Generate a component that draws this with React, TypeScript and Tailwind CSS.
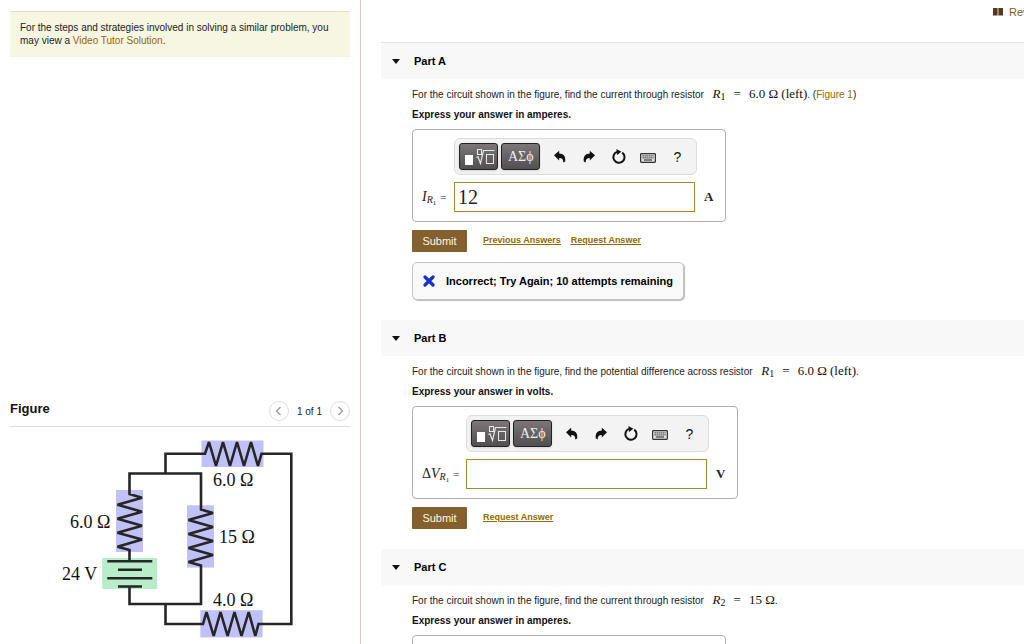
import React, { useId, useState } from "react";

interface PartProps {
  title: string;
  prompt: React.ReactNode;
  instruction: string;
  label: React.ReactNode;
  labelClass: string;
  unit: string;
  initialValue?: string;
  first?: boolean;
  hasPrevious?: boolean;
  feedback?: string;
}

const LINK = "text-[#8f6b00] hover:underline";
const MATH = "font-['Liberation_Serif',serif]";

function UndoIcon({ flip = false }: { flip?: boolean }) {
  return (
    <svg width="14" height="14" viewBox="0 0 14 14" className={flip ? "-scale-x-100" : ""} aria-hidden="true">
      <path d="M1 5.200 6.200.8v2.700c4.200 0 6.800 2.800 6 7.900l-2 1.200c.4-3-.8-4.700-4-4.700v2.500z" fill="#111" />
    </svg>
  );
}

function ResetIcon() {
  return (
    <svg width="16" height="16" viewBox="0 0 16 16" aria-hidden="true">
      <path d="M11.200 3.600A5.600 5.600 0 1 1 6 2.900" fill="none" stroke="#111" strokeWidth="2" />
      <path d="M5.400 0 10.400 2.700 6 6z" fill="#111" />
    </svg>
  );
}

function KeyboardIcon() {
  return (
    <svg width="16" height="10" viewBox="0 0 16 10" aria-hidden="true">
      <rect x=".6" y=".6" width="14.800" height="8.800" rx=".8" fill="#ddd" stroke="#333" strokeWidth="1.200" />
      <path d="M2.500 2.800h11M2.500 4.800h11" stroke="#444" strokeWidth="1.200" strokeDasharray="1.300 .7" />
      <path d="M4 7h8" stroke="#444" strokeWidth="1.200" />
    </svg>
  );
}

function TemplateIcon() {
  return (
    <svg width="32" height="20" viewBox="0 0 32 20" aria-hidden="true" className="shrink-0">
      <rect x="2" y="8" width="8" height="10" fill="#fff" />
      <g fill="none" stroke="#e8e8e8" strokeWidth="1">
        <rect x="14.500" y="2.500" width="4" height="5" />
        <path d="M13.500 10.500 15 9.800l2.500 6.700 3-13H31.500" strokeWidth="1.200" />
        <rect x="23.500" y="7.500" width="7" height="9" />
      </g>
    </svg>
  );
}

function Toolbar() {
  const dark =
    "flex h-[27px] w-10 items-center justify-center rounded-[3px] border border-[#222] bg-linear-to-b from-[#7c7678] to-[#525052] text-[#eee] shadow-sm";
  const plain = "flex h-[27px] w-[30px] items-center justify-center text-[#111]";
  return (
    <div className="flex w-[243px] rounded-md border border-[#dcdcdc] bg-[#f3f3f3] p-1">
      <button type="button" aria-label="Templates" className={dark}>
        <TemplateIcon />
      </button>
      <button type="button" className={`${dark} ml-[3px] font-['Liberation_Serif',serif] text-sm`}>
        ΑΣϕ
      </button>
      <button type="button" aria-label="Undo" className={`${plain} ml-[5px]`}>
        <UndoIcon />
      </button>
      <button type="button" aria-label="Redo" className={plain}>
        <UndoIcon flip />
      </button>
      <button type="button" aria-label="Reset" className={plain}>
        <ResetIcon />
      </button>
      <button type="button" aria-label="Keyboard shortcuts" className={`${plain} pt-[2px]`}>
        <KeyboardIcon />
      </button>
      <button type="button" className={`${plain} text-sm`}>
        ?
      </button>
    </div>
  );
}

function Part({
  title,
  prompt,
  instruction,
  label,
  labelClass,
  unit,
  initialValue = "",
  first = false,
  hasPrevious = false,
  feedback,
}: PartProps) {
  const id = useId();
  const [open, setOpen] = useState(true);
  const [value, setValue] = useState(initialValue);

  return (
    <section className="mb-5">
      <h2 className={`bg-[#f8f8f8] ${first ? "border-t border-[#e2e2e2]" : ""}`}>
        <button
          type="button"
          onClick={() => setOpen(!open)}
          aria-expanded={open}
          className="flex h-9 w-full items-center gap-[14px] pl-[11px] text-[11px] font-bold text-black"
        >
          <svg width="8" height="5" viewBox="0 0 8 5" aria-hidden="true">
            <path d="M0 0h8L4 5z" fill="#111" />
          </svg>
          {title}
        </button>
      </h2>
      {open && (
        <div className="pt-[6px] pl-[31px]">
          <p className="h-[18px] text-[10px] leading-[18px] whitespace-nowrap">{prompt}</p>
          <p className="mt-[3px] text-[10px] leading-[18px] font-bold text-[#111]">{instruction}</p>
          <div className="mt-[5px] w-fit rounded-[4px] border border-[#b0b0b0] pt-2 pr-[10px] pb-[9px] pl-[9px]">
            <div className="flex">
              <span className={labelClass} />
              <Toolbar />
            </div>
            <div className="mt-[7px] flex items-center">
              <label htmlFor={id} className={`${labelClass} ${MATH} text-sm whitespace-nowrap text-[#222]`}>
                {label}
              </label>
              <input
                id={id}
                value={value}
                onChange={(e) => setValue(e.target.value)}
                className="h-[30px] w-[241px] border border-[#a58a2c] bg-white px-[3px] font-['Liberation_Serif',serif] text-xl text-[#222] outline-none"
              />
              <span className={`${MATH} ml-[9px] w-[11px] text-[13px] font-bold text-[#222]`}>{unit}</span>
            </div>
          </div>
          <div className="mt-2 flex items-center">
            <button type="button" className="h-[22px] w-[55px] rounded-[1px] bg-[#85602f] text-[11px] text-[#fdf8dc]">
              Submit
            </button>
            <div className="ml-4 flex gap-[10px] pb-[2px] text-[9px] leading-[18px] font-bold text-[#8f6b00] underline">
              {hasPrevious && <a href="#previous">Previous Answers</a>}
              <a href="#request">Request Answer</a>
            </div>
          </div>
          {feedback && (
            <div className="mt-[10px] flex h-[38px] w-fit items-center gap-[11px] rounded-[5px] border border-[#c4c4c4] bg-[#f9f9f9] px-[10px] text-[11px] font-bold text-black shadow-[1px_1px_1px_#bbb]">
              <svg width="12" height="12" viewBox="0 0 12 12" aria-hidden="true">
                <path d="M2 2l8 8M10 2l-8 8" stroke="#1531c9" strokeWidth="3.200" strokeLinecap="round" />
              </svg>
              {feedback}
            </div>
          )}
        </div>
      )}
    </section>
  );
}

function Quantity({ index, children }: { index: number; children: React.ReactNode }) {
  return (
    <span className={`${MATH} ml-[6px] text-[13px] text-[#111]`}>
      <i>R</i>
      <span className="relative top-[2px] text-[10px]">{index}</span>
      <span className="px-2">=</span>
      {children}
    </span>
  );
}

function AnswerLabel({ symbol, index }: { symbol: React.ReactNode; index: number }) {
  return (
    <>
      {symbol}
      <i className="relative top-[2px] text-[10px]">R</i>
      <span className="relative top-1 text-[7px]">{index}</span>
      <span className="pl-1 text-[11px]">=</span>
    </>
  );
}

function Circuit() {
  return (
    <svg viewBox="10 427 340 217" className="w-full" role="img" aria-label="Circuit diagram">
      <g fill="#bfc1f8">
        <rect x="201.500" y="440.500" width="62" height="26.500" />
        <rect x="116" y="490" width="27" height="62" />
        <rect x="187" y="505.300" width="27" height="62.300" />
        <rect x="200.300" y="610.200" width="62.300" height="27.200" />
      </g>
      <rect x="102.200" y="558" width="55" height="31" fill="#b7edc8" />
      <g fill="none" stroke="#262626" strokeWidth="2.600" strokeMiterlimit="2">
        <path d="M165.500 473.500V453.700H205L209 442 216 466 223 442 230 466 237 442 244 466 251 442 258 466 261.500 453.700H291.300V624H258.500L255.300 636 248.700 612 241.500 636 234.500 612 227.600 636 220.500 612 213.700 636 206.500 612 203 624H165.500V604" />
        <path d="M129.500 561V550L117.500 546.700 142 539.500 117.500 532.700 142 525.700 117.500 518.700 142 511.700 117.500 504.700 142 497.700 129.500 494V473.500H201V509.500L213 513 188.500 520 213 527 188.500 534 213 541 188.500 548 213 555 188.500 562 201 565.500V604H129.500V587" />
        <path d="M107.300 561.200h45M118 569.700h24M107.300 578.300h45M118 586.500h24" />
      </g>
      <g className="font-['Liberation_Serif',serif] text-lg" fill="#111">
        <text x="213" y="486">6.0 Ω</text>
        <text x="70" y="528">6.0 Ω</text>
        <text x="219" y="543">15 Ω</text>
        <text x="62" y="580">24 V</text>
        <text x="213" y="606">4.0 Ω</text>
      </g>
    </svg>
  );
}

function PagerButton({ label, d }: { label: string; d: string }) {
  return (
    <button
      type="button"
      aria-label={label}
      className="flex h-5 w-5 items-center justify-center rounded-full border border-[#ddd] bg-white"
    >
      <svg width="10" height="10" viewBox="0 0 10 10" aria-hidden="true">
        <path d={d} fill="none" stroke="#999" strokeWidth="1.300" />
      </svg>
    </button>
  );
}

export default function App() {
  return (
    <div className="flex h-screen overflow-hidden bg-white font-['Liberation_Sans',Arial,sans-serif] text-[#222]">
      <aside className="flex w-[361px] shrink-0 flex-col border-r border-[#d8cfc8] px-[10px]">
        <div className="flex-1 pt-[11px]">
          <p className="border-t border-[#dfdfd0] bg-[#f6f6e3] px-[10px] pt-[9px] pb-[10px] text-[10px] leading-[13px]">
            For the steps and strategies involved in solving a similar problem, you may view a{" "}
            <a href="#video" className={LINK}>
              Video Tutor Solution
            </a>
            .
          </p>
        </div>
        <div className="flex h-[31px] items-center justify-between border-b border-[#ddd]">
          <h2 className="pb-1 text-[13px] font-bold text-[#111]">Figure</h2>
          <div className="flex items-center gap-2 text-[10px]">
            <PagerButton label="Previous figure" d="M6.500 1 2.500 5l4 4" />
            <span>1 of 1</span>
            <PagerButton label="Next figure" d="M3.500 1l4 4-4 4" />
          </div>
        </div>
        <Circuit />
      </aside>

      <main className="min-w-0 flex-1 overflow-hidden pl-5">
        <div className="flex h-[42px] justify-end pt-[5px]">
          <a href="#review" className="flex h-[14px] w-[31px] items-center gap-[6px] text-[11px] whitespace-nowrap text-[#7a5f14]">
            <svg width="10" height="8" viewBox="0 0 10 8" className="shrink-0" aria-hidden="true">
              <path d="M0 0h4.600v7.500H0zM5.400 0H10v7.500H5.400z" fill="#54391a" />
            </svg>
            Review
          </a>
        </div>

        <Part
          first
          hasPrevious
          title="Part A"
          prompt={
            <>
              For the circuit shown in the figure, find the current through resistor{" "}
              <Quantity index={1}>6.0 Ω (left)</Quantity>. (
              <a href="#figure" className={LINK}>
                Figure 1
              </a>
              )
            </>
          }
          instruction="Express your answer in amperes."
          label={<AnswerLabel symbol={<i>I</i>} index={1} />}
          labelClass="w-8 shrink-0"
          unit="A"
          initialValue="12"
          feedback="Incorrect; Try Again; 10 attempts remaining"
        />
        <Part
          title="Part B"
          prompt={
            <>
              For the circuit shown in the figure, find the potential difference across resistor{" "}
              <Quantity index={1}>6.0 Ω (left)</Quantity>.
            </>
          }
          instruction="Express your answer in volts."
          label={<AnswerLabel symbol={<>Δ<i>V</i></>} index={1} />}
          labelClass="w-11 shrink-0"
          unit="V"
        />
        <Part
          title="Part C"
          prompt={
            <>
              For the circuit shown in the figure, find the current through resistor{" "}
              <Quantity index={2}>15 Ω</Quantity>.
            </>
          }
          instruction="Express your answer in amperes."
          label={<AnswerLabel symbol={<i>I</i>} index={2} />}
          labelClass="w-8 shrink-0"
          unit="A"
        />
      </main>
    </div>
  );
}
